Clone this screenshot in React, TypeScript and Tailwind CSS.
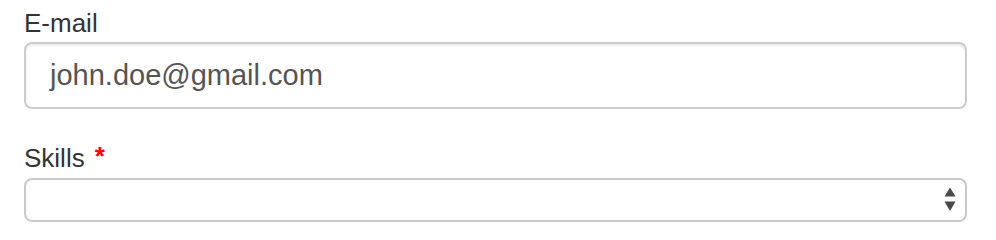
import React from 'react';

const SelectArrows: React.FC = () => (
  <svg width="12" height="26" viewBox="0 0 12 26" className="absolute right-[9px] top-1/2 -translate-y-1/2">
    <path d="M6 0.5 L11.5 9.5 L0.5 9.5 Z" fill="#4a4a4a" />
    <path d="M0.5 14.5 L11.5 14.5 L6 24 Z" fill="#4a4a4a" />
  </svg>
);

export default function App() {
  return (
    <div className="w-[996px] h-[240px] bg-white pl-[24px] pt-[10px]" style={{ fontFamily: '"Liberation Sans", Arial, sans-serif' }}>
      <div className="w-[943px]">
        {/* E-mail */}
        <label className="block text-[26px] leading-[26px] text-[#333] mb-[6px]">E-mail</label>
        <div className="h-[67px] rounded-[8px] border-2 border-[#cccccc] bg-white shadow-[inset_0_2px_2px_rgba(0,0,0,0.075)] flex items-center pl-[24px]">
          <span className="text-[29px] text-[#555]">john.doe@gmail.com</span>
        </div>

        {/* Skills */}
        <label className="flex items-start mt-[36px] mb-[7px] text-[26px] leading-[26px] text-[#333]">
          Skills
          <span className="ml-[10px] -mt-[2px] text-[26px] font-bold text-[#ff0000]">*</span>
        </label>
        <div className="relative h-[44px] rounded-[8px] border-2 border-[#c9c9c9] bg-white">
          <SelectArrows />
        </div>
      </div>
    </div>
  );
}
